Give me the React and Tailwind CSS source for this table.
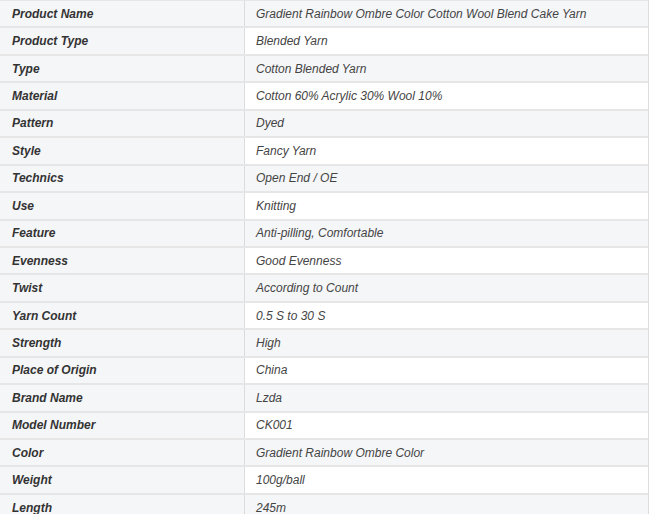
import React from 'react';

const rows = [
  ['Product Name', 'Gradient Rainbow Ombre Color Cotton Wool Blend Cake Yarn'],
  ['Product Type', 'Blended Yarn'],
  ['Type', 'Cotton Blended Yarn'],
  ['Material', 'Cotton 60% Acrylic 30% Wool 10%'],
  ['Pattern', 'Dyed'],
  ['Style', 'Fancy Yarn'],
  ['Technics', 'Open End / OE'],
  ['Use', 'Knitting'],
  ['Feature', 'Anti-pilling, Comfortable'],
  ['Evenness', 'Good Evenness'],
  ['Twist', 'According to Count'],
  ['Yarn Count', '0.5 S to 30 S'],
  ['Strength', 'High'],
  ['Place of Origin', 'China'],
  ['Brand Name', 'Lzda'],
  ['Model Number', 'CK001'],
  ['Color', 'Gradient Rainbow Ombre Color'],
  ['Weight', '100g/ball'],
  ['Length', '245m'],
];

export default function App() {
  return (
    <div className="w-[650px] h-[514px] overflow-hidden bg-white" style={{ fontFamily: "'Liberation Sans', Arial, sans-serif" }}>
      <div className="w-[649px] border-r border-[#dcdcdc] -mt-px">
        {rows.map(([label, value], i) => (
          <div key={label} className="flex h-[27.45px] border-t-2 border-[#e6e6e6] text-[12px] italic">
            <div className="w-[245px] shrink-0 bg-[#f5f6f8] border-r border-[#dcdcdc] pl-[12px] flex items-center font-bold text-[#333]">
              {label}
            </div>
            <div className={`flex-1 pl-[11px] flex items-center text-[#444] ${i % 2 === 0 ? 'bg-[#f5f6f8]' : 'bg-white'}`}>
              {value}
            </div>
          </div>
        ))}
      </div>
    </div>
  );
}
